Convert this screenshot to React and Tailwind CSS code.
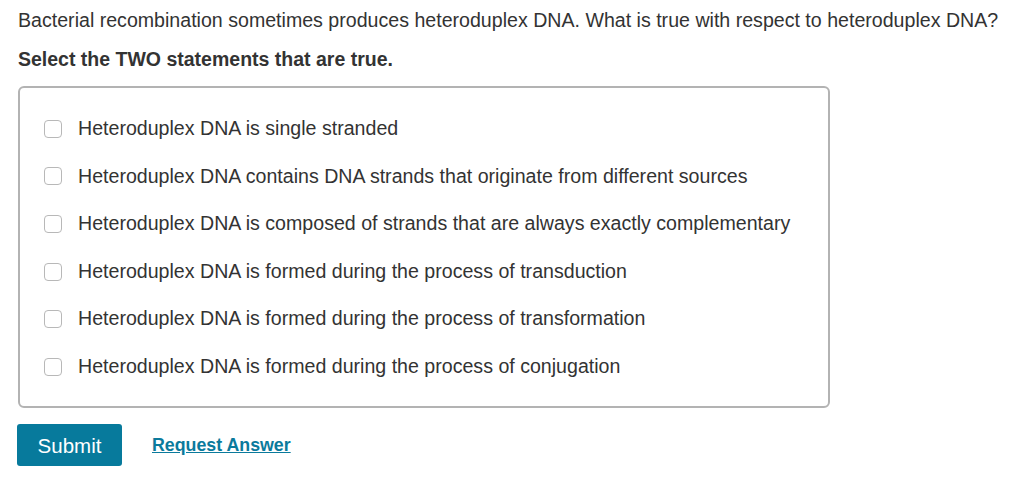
import React, { useState } from "react";

const options = [
  "Heteroduplex DNA is single stranded",
  "Heteroduplex DNA contains DNA strands that originate from different sources",
  "Heteroduplex DNA is composed of strands that are always exactly complementary",
  "Heteroduplex DNA is formed during the process of transduction",
  "Heteroduplex DNA is formed during the process of transformation",
  "Heteroduplex DNA is formed during the process of conjugation",
];

const App = () => {
  const [checked, setChecked] = useState([]);

  const toggle = (i) => {
    setChecked((prev) => (prev.includes(i) ? prev.filter((x) => x !== i) : [...prev, i]));
  };

  return (
    <div className="bg-white min-h-screen pl-[18px] pt-[9px] text-[#333] font-['Liberation_Sans',Arial,sans-serif]">
      <p className="text-[19.6px] leading-[22px] whitespace-nowrap">
        Bacterial recombination sometimes produces heteroduplex DNA. What is true with respect to heteroduplex DNA?
      </p>
      <p className="mt-[17px] text-[19.5px] leading-[22px] font-bold">Select the TWO statements that are true.</p>

      <div className="mt-[16px] w-[812px] h-[322px] border-2 border-[#b3b3b3] rounded-[6px] pl-[24px] pt-[17px]">
        {options.map((opt, i) => (
          <label key={i} className="flex items-center h-[47.6px] cursor-pointer">
            <span
              onClick={() => toggle(i)}
              className={`w-[18px] h-[18px] rounded-[4px] border-[1.5px] border-[#b8b8b8] shrink-0 ${checked.includes(i) ? "bg-[#0b7a9c]" : "bg-white"}`}
            />
            <span className="ml-[16px] text-[19.6px] whitespace-nowrap">{opt}</span>
          </label>
        ))}
      </div>

      <div className="flex items-center mt-[16px]">
        <button className="w-[105px] h-[42px] rounded-[3px] bg-[#077a9c] text-white text-[20.5px] pt-[3px] -ml-[1px]">Submit</button>
        <a href="#" className="ml-[30px] text-[#0b7a9c] font-bold text-[17.8px] underline">
          Request Answer
        </a>
      </div>
    </div>
  );
};

export default App;
